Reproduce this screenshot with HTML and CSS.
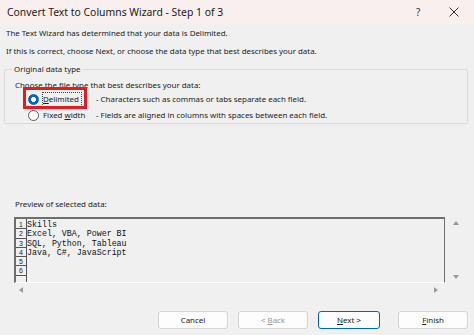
FILE: index.html
```html
<!DOCTYPE html>
<html>
<head>
<meta charset="utf-8">
<link rel="stylesheet" href="styles.css">
</head>
<body>
<div class="dialog">
  <div class="titlebar">
    <span class="title">Convert Text to Columns Wizard - Step 1 of 3</span>
    <span class="help">?</span>
    <span class="close"><svg width="10" height="10" viewBox="0 0 10 10"><path d="M0.5 0.5 L9.5 9.5 M9.5 0.5 L0.5 9.5" stroke="#333" stroke-width="1" fill="none"/></svg></span>
  </div>
  <div class="body">
    <p class="line">The Text Wizard has determined that your data is Delimited.</p>
    <p class="line">If this is correct, choose Next, or choose the data type that best describes your data.</p>
    <fieldset class="group">
      <legend>Original data type</legend>
      <div class="choose">Choose the file type that best describes your data:</div>
      <div class="opt opt-first">
        <span class="radio checked"></span>
        <span class="lbl"><span class="focus"><u>D</u>elimited</span></span>
        <span class="desc">- Characters such as commas or tabs separate each field.</span>
        <span class="highlight"></span>
      </div>
      <div class="opt">
        <span class="radio"></span>
        <span class="lbl">Fixed <u>w</u>idth</span>
        <span class="desc">- Fields are aligned in columns with spaces between each field.</span>
      </div>
    </fieldset>
    <div class="preview-label">Preview of selected data:</div>
    <div class="preview">
      <div class="box">
        <div class="nums">
          <div class="num">1</div><div class="num">2</div><div class="num">3</div><div class="num">4</div><div class="num">5</div><div class="num">6</div><div class="num last"></div>
        </div>
        <div class="data">
          <div class="row">Skills</div>
          <div class="row">Excel, VBA, Power BI</div>
          <div class="row">SQL, Python, Tableau</div>
          <div class="row">Java, C#, JavaScript</div>
        </div>
      </div>
      <div class="vscroll">
        <svg width="8" height="6" viewBox="0 0 8 6"><path d="M4 1 L7 5 L1 5 Z" fill="#9a9a9a"/></svg>
        <svg width="8" height="6" viewBox="0 0 8 6"><path d="M1 1 L7 1 L4 5 Z" fill="#9a9a9a"/></svg>
      </div>
      <div class="hscroll">
        <svg width="6" height="8" viewBox="0 0 6 8"><path d="M5 1 L5 7 L1 4 Z" fill="#9a9a9a"/></svg>
        <svg width="6" height="8" viewBox="0 0 6 8"><path d="M1 1 L1 7 L5 4 Z" fill="#9a9a9a"/></svg>
      </div>
    </div>
    <div class="buttons">
      <button class="btn">Cancel</button>
      <button class="btn disabled">&lt; <u>B</u>ack</button>
      <button class="btn primary"><u>N</u>ext &gt;</button>
      <button class="btn"><u>F</u>inish</button>
    </div>
  </div>
</div>
</body>
</html>
```

FILE: styles.css
```css
html, body {
  margin: 0;
  padding: 0;
  background: #f0f0f0;
}
body {
  width: 474px;
  height: 335px;
  overflow: hidden;
  font-family: "Noto Sans", "Open Sans", sans-serif;
  color: #1a1a1a;
}
.dialog {
  width: 474px;
  height: 335px;
  display: flex;
  flex-direction: column;
}
.titlebar {
  height: 24px;
  background: #f9efef;
  display: flex;
  align-items: center;
  padding-left: 7px;
  box-sizing: border-box;
}
.title {
  font-size: 10.4px;
  flex: 1;
  color: #1a1a1a;
}
.help {
  font-size: 10px;
  color: #333;
  width: 10px;
  margin-right: 23px;
}
.close {
  width: 10px;
  height: 10px;
  margin-right: 15px;
  display: flex;
}
.body {
  flex: 1;
  display: flex;
  flex-direction: column;
}
.line {
  margin: 0;
  padding-left: 6px;
  height: 18px;
  line-height: 18px;
  font-size: 7.9px;
}
.group {
  margin: 3px 6px 0 4px;
  padding: 0 0 1px 10px;
  border: 1px solid #dadada;
  border-radius: 2px;
}
.group legend {
  font-size: 7.9px;
  line-height: 12px;
  padding: 0 2px;
  margin-left: -3px;
}
.choose {
  font-size: 7.9px;
  line-height: 14px;
  height: 14px;
  margin-top: 3px;
}
.opt {
  position: relative;
  display: flex;
  align-items: center;
  height: 14px;
  font-size: 7.9px;
  margin-top: 2px;
}
.opt-first {
  margin-top: 0;
}
.radio {
  width: 9px;
  height: 9px;
  border: 1px solid #5a5a5a;
  border-radius: 50%;
  margin-left: 13px;
  box-sizing: content-box;
  background: #fff;
}
.radio.checked {
  border-color: #0067c0;
  background: radial-gradient(circle, #ffffff 0 2.2px, #0067c0 2.8px);
}
.lbl {
  margin-left: 4px;
  width: 53px;
  flex: none;
}
.focus {
  outline: 1px dotted #444;
  padding: 0 2px 0 0;
  line-height: 13px;
  display: inline-block;
}
.highlight {
  position: absolute;
  left: 8px;
  top: -5px;
  width: 64px;
  height: 22px;
  border: 3px solid #e31b23;
  box-sizing: border-box;
  pointer-events: none;
}
.preview-label {
  font-size: 7.9px;
  line-height: 14px;
  margin-top: 73px;
  padding-left: 15px;
}
.preview {
  margin: 6px 0 0 14px;
  display: grid;
  grid-template-columns: 431px 22px;
  grid-template-rows: 66px 14px;
}
.box {
  border-top: 2px solid #6e6e6e;
  border-left: 2px solid #6e6e6e;
  border-right: 1px solid #6e6e6e;
  border-bottom: 1px solid #ffffff;
  display: flex;
  box-sizing: border-box;
  background: #f0f0f0;
}
.nums {
  width: 10px;
  display: flex;
  flex-direction: column;
  border-right: 1px solid #555;
  padding-top: 1px;
}
.num {
  height: 9.3px;
  border-bottom: 1px solid #555;
  font-size: 7px;
  line-height: 9px;
  text-align: center;
  font-family: "Liberation Sans", sans-serif;
  color: #222;
  box-sizing: border-box;
}
.num.last {
  border-bottom: none;
  flex: 1;
}
.data {
  font-family: "Liberation Mono", "Courier New", monospace;
  font-size: 8.3px;
  color: #111;
  padding-top: 1px;
}
.row {
  height: 9.3px;
  line-height: 9.3px;
}
.vscroll {
  display: flex;
  flex-direction: column;
  justify-content: space-between;
  align-items: center;
  padding: 3px 0 3px;
}
.hscroll {
  display: flex;
  justify-content: space-between;
  align-items: center;
  padding: 0 6px 0 4px;
}
.buttons {
  margin-top: 14px;
  display: flex;
  padding-left: 158px;
  gap: 10px;
}
.btn {
  width: 70px;
  height: 18px;
  background: #fdfdfd;
  border: 1px solid #d4d4d4;
  border-radius: 3px;
  font-family: "Noto Sans", sans-serif;
  font-size: 7.9px;
  color: #1a1a1a;
  padding: 0;
  line-height: 16px;
}
.btn.disabled {
  color: #9a9a9a;
}
.btn.primary {
  width: 62px;
  border-color: #0067c0;
  margin-right: 8px;
}
```
